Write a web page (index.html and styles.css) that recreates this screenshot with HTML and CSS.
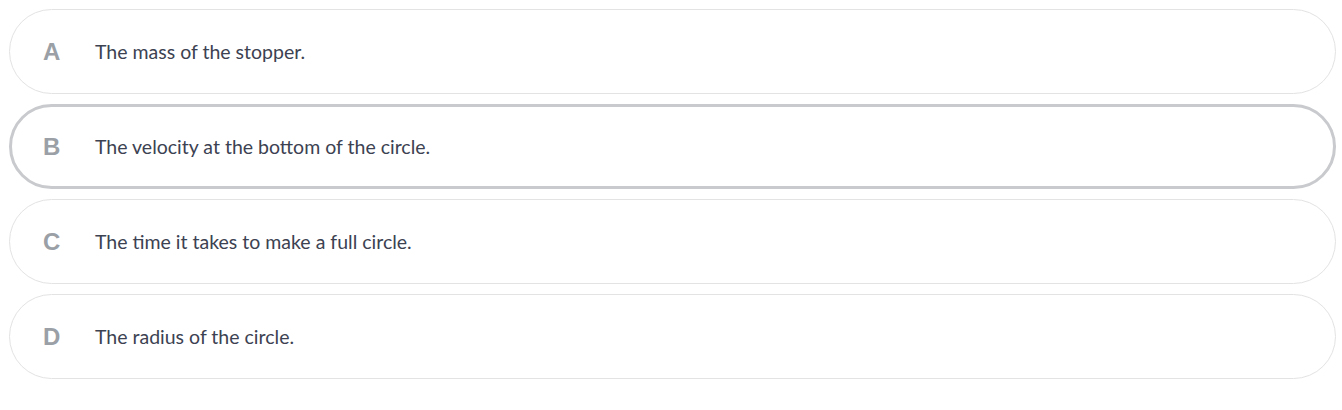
FILE: index.html
```html
<!DOCTYPE html>
<html>
<head>
<meta charset="utf-8">
<link rel="stylesheet" href="styles.css">
</head>
<body>
<div class="options">
  <div class="option"><span class="letter">A</span><span class="text">The mass of the stopper.</span></div>
  <div class="option selected"><span class="letter">B</span><span class="text">The velocity at the bottom of the circle.</span></div>
  <div class="option"><span class="letter">C</span><span class="text">The time it takes to make a full circle.</span></div>
  <div class="option"><span class="letter">D</span><span class="text">The radius of the circle.</span></div>
</div>
</body>
</html>
```
FILE: styles.css
```css
html, body {
  margin: 0;
  padding: 0;
  background: #ffffff;
}
.options {
  display: flex;
  flex-direction: column;
  gap: 10px;
  padding: 9px 6px 0 9px;
}
.option {
  box-sizing: border-box;
  height: 85px;
  border: 1px solid #e3e3e3;
  border-radius: 43px;
  display: flex;
  align-items: center;
  padding-left: 33px;
  background: #fff;
}
.option.selected {
  border: 3px solid #c8cacd;
  padding-left: 31px;
}
.letter {
  width: 52px;
  flex: none;
  font-family: "Liberation Sans", Arial, sans-serif;
  font-weight: bold;
  font-size: 24px;
  color: #9aa0a6;
}
.text {
  font-family: Lato, sans-serif;
  font-size: 19.5px;
  color: #3c4252;
}
```
